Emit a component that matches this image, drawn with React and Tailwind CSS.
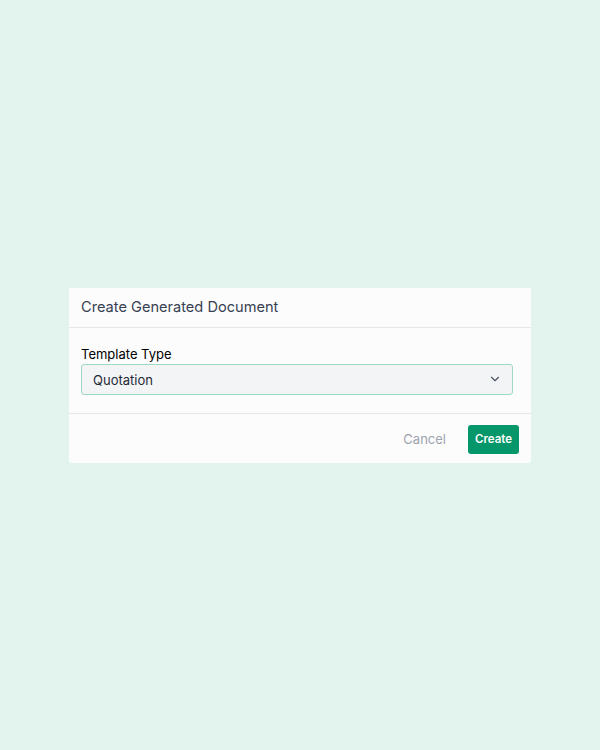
import { useState } from "react";

const App = () => {
  const [templateType, setTemplateType] = useState("Quotation");

  return (
    <div
      className="min-h-[750px] w-full bg-[#e3f4ee] flex items-center justify-center"
      style={{ fontFamily: "Inter, 'Noto Sans', sans-serif" }}
    >
      <div className="w-[462px] bg-[#fcfcfd] rounded-[2px]">
        <div className="h-[40px] px-3 pt-[2px] flex items-center border-b border-[#e5e7eb]">
          <p className="text-[14.6px] text-[#374151]">Create Generated Document</p>
        </div>
        <div className="pl-3 pr-[18px] pt-[17px] pb-[18px] border-b border-[#e5e7eb]">
          <p className="text-[13px] leading-[18px] text-black mb-[1px]">Template Type</p>
          <div className="relative">
            <select
              className="appearance-none w-full h-[31px] pl-[11px] pr-8 pt-[3px] text-[13px] text-[#1f2937] bg-[#f3f4f6] border border-[#9dd9c4] rounded-[3px] outline-none"
              value={templateType}
              onChange={(e) => setTemplateType(e.target.value)}
            >
              <option value="Quotation">Quotation</option>
              <option value="Invoice">Invoice</option>
              <option value="Receipt">Receipt</option>
            </select>
            <svg
              className="absolute right-[11px] top-[8px] pointer-events-none"
              width="14"
              height="14"
              viewBox="0 0 24 24"
              fill="none"
              stroke="#4b5563"
              strokeWidth="2"
              strokeLinecap="round"
              strokeLinejoin="round"
            >
              <path d="M6 9l6 6 6-6" />
            </svg>
          </div>
        </div>
        <div className="h-[49px] pl-[11px] pr-3 pt-[3px] flex items-center justify-end gap-[22px]">
          <button className="text-[13px] text-[#9ca3af]">Cancel</button>
          <button className="h-[29px] w-[51px] rounded-[3px] bg-[#059669] text-white text-[11.5px] font-semibold">
            Create
          </button>
        </div>
      </div>
    </div>
  );
};

export default App;
